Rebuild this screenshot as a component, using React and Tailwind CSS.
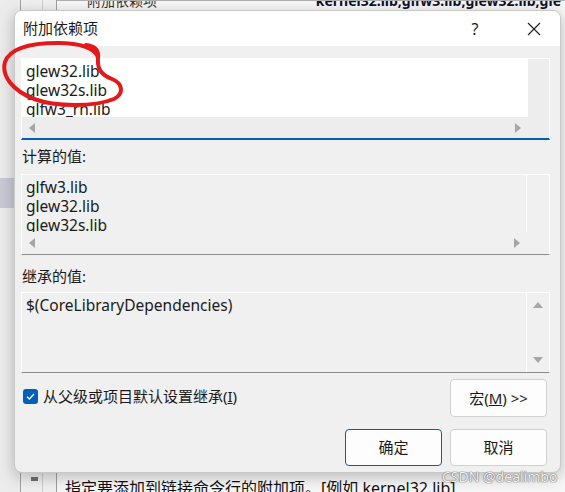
import React from 'react';

const font = { fontFamily: '"Noto Sans", "Noto Sans CJK SC", sans-serif' };

const ArrowLeft = () => (
  <svg width="7" height="10" viewBox="0 0 7 10"><polygon points="6,0 6,10 0,5" fill="#a6a6a6" /></svg>
);
const ArrowRight = () => (
  <svg width="7" height="10" viewBox="0 0 7 10"><polygon points="1,0 1,10 7,5" fill="#a6a6a6" /></svg>
);
const ArrowUp = () => (
  <svg width="10" height="7" viewBox="0 0 10 7"><polygon points="0,6 10,6 5,0" fill="#a6a6a6" /></svg>
);
const ArrowDown = () => (
  <svg width="10" height="7" viewBox="0 0 10 7"><polygon points="0,1 10,1 5,7" fill="#a6a6a6" /></svg>
);

const HScroll = () => (
  <div className="flex items-center justify-between px-[7px] h-full">
    <ArrowLeft />
    <ArrowRight />
  </div>
);

const Lines = ({ items }) => (
  <div className="px-[4px] pt-[3px] text-[15.5px] leading-[19px] text-[#1a1a1a]">
    {items.map((t) => (
      <div key={t} className="whitespace-nowrap">{t}</div>
    ))}
  </div>
);

export default function App() {
  return (
    <div className="relative w-[565px] h-[492px] overflow-hidden bg-[#f0f0f0]" style={font}>
      {/* property page behind the dialog */}
      <div className="absolute inset-0 flex">
        <div className="w-[21px] border-r border-[#a0a0a0] bg-[#ececec] flex flex-col">
          <div className="mt-[178px] h-[30px] bg-[#c9cad6]" />
        </div>
        <div className="w-[22px] border-r border-[#d0d0d0] bg-[#f0f0f0]" />
        <div className="w-[14px] border-r border-[#a0a0a0] bg-[#f0f0f0] flex flex-col justify-end">
          <div className="mb-[11px] ml-[-12px] w-[7px] h-[4px] bg-[#707070]" />
        </div>
        <div className="flex-1 flex flex-col justify-between bg-[#f7f7f7]">
          <div className="flex items-end h-[9px] overflow-hidden border-t border-[#b0b0b0] text-[14px] leading-[16px]">
            <span className="ml-[30px] text-[#333]">附加依赖项</span>
            <span className="ml-auto mr-[4px] font-bold text-[#101030] whitespace-nowrap">kernel32.lib;glfw3.lib;glew32.lib;gle</span>
          </div>
          <div className="h-[16px] overflow-hidden pl-[8px] text-[16px] leading-[24px] text-[#111] whitespace-nowrap">
            指定要添加到链接命令行的附加项。[例如 kernel32.lib]
          </div>
        </div>
      </div>

      {/* annotation */}
      <svg className="absolute left-0 top-0 z-20" width="140" height="120" viewBox="0 0 140 120">
        <path
          d="M98 58 C96 48 80 43 58 43 C32 43 10 48 5 62 C1 77 14 91 34 99 C56 107 94 107 114 99 C125 93 122 83 112 79 C102 75 97 70 98 58 C99 50 94 46 86 45"
          fill="none"
          stroke="#e3191c"
          strokeWidth="4"
          strokeLinecap="round"
        />
      </svg>

      {/* dialog */}
      <div className="absolute left-[14px] top-[10px] w-[547px] h-[463px] flex flex-col rounded-[8px] border border-[#c8c8c8] bg-[#f0f0f0] shadow-[0_4px_16px_rgba(0,0,0,0.25)] overflow-hidden z-10">
        <div className="h-[35px] shrink-0 bg-white flex items-center pl-[8px] text-[15px] text-[#1a1a1a]">
          <span>附加依赖项</span>
          <span className="ml-auto w-[40px] text-center text-[16px]">?</span>
          <span className="ml-[19px] mr-[6px] w-[40px] flex justify-center">
            <svg width="14" height="14" viewBox="0 0 14 14">
              <path d="M1 1 L13 13 M13 1 L1 13" stroke="#222" strokeWidth="1.2" />
            </svg>
          </span>
        </div>

        <div className="flex-1 flex flex-col pl-[6px] pr-[10px] pt-[12px] pb-[8px] text-[#1a1a1a]">
          <div className="h-[82px] border-x border-t border-white border-b-2 border-b-[#005fb8] bg-[#ededed] grid grid-cols-[1fr_21px] grid-rows-[58px_1fr]">
            <div className="bg-white overflow-hidden">
              <Lines items={['glew32.lib', 'glew32s.lib', 'glfw3_rn.lib']} />
            </div>
            <div />
            <HScroll />
            <div />
          </div>

          <div className="mt-[7px] ml-[1px] text-[15px] leading-[19px]">计算的值:</div>
          <div className="mt-[8px] h-[81px] border-x border-t border-white border-b border-b-[#8c8c8c] bg-[#f0f0f0] grid grid-cols-[1fr_22px] grid-rows-[57px_1fr]">
            <div className="overflow-hidden border-r border-white">
              <Lines items={['glfw3.lib', 'glew32.lib', 'glew32s.lib']} />
            </div>
            <div />
            <HScroll />
            <div />
          </div>

          <div className="mt-[12px] ml-[1px] text-[15px] leading-[19px]">继承的值:</div>
          <div className="mt-[6px] h-[81px] border-x border-t border-white border-b border-b-[#8c8c8c] bg-[#f0f0f0] flex">
            <div className="flex-1 overflow-hidden border-r border-white">
              <Lines items={['$(CoreLibraryDependencies)']} />
            </div>
            <div className="w-[22px] flex flex-col items-center justify-between py-[9px]">
              <ArrowUp />
              <ArrowDown />
            </div>
          </div>

          <div className="mt-[6px] flex items-start">
            <div className="mt-[8px] ml-[2px] flex items-center gap-[5px]">
              <div className="w-[15px] h-[15px] rounded-[3px] bg-[#005fb8] flex items-center justify-center">
                <svg width="11" height="11" viewBox="0 0 11 11">
                  <path d="M2 5.8 L4.4 8 L9 3" fill="none" stroke="#fff" strokeWidth="1.3" />
                </svg>
              </div>
              <span className="text-[15px] leading-[19px]">
                从父级或项目默认设置继承(<span className="underline">I</span>)
              </span>
            </div>
            <button className="ml-auto mr-[3px] w-[97px] h-[38px] rounded-[4px] border border-[#d0d0d0] bg-[#fdfdfd] text-[15px]">
              宏(<span className="underline">M</span>) &gt;&gt;
            </button>
          </div>

          <div className="mt-[12px] flex justify-end gap-[8px] mr-[3px]">
            <button className="w-[97px] h-[37px] rounded-[4px] border border-[#005fb8] bg-[#fdfdfd] text-[15px]">确定</button>
            <button className="w-[97px] h-[37px] rounded-[4px] border border-[#d0d0d0] bg-[#fdfdfd] text-[15px]">取消</button>
          </div>
        </div>
      </div>

      {/* watermark */}
      <div
        className="absolute left-[442px] top-[467px] z-20 text-[14px] leading-[20px] text-white/90 whitespace-nowrap"
        style={{ textShadow: '0 0 1px #777, 0 0 1px #777, 0 0 1px #777' }}
      >
        CSDN @dealimbo
      </div>
    </div>
  );
}
